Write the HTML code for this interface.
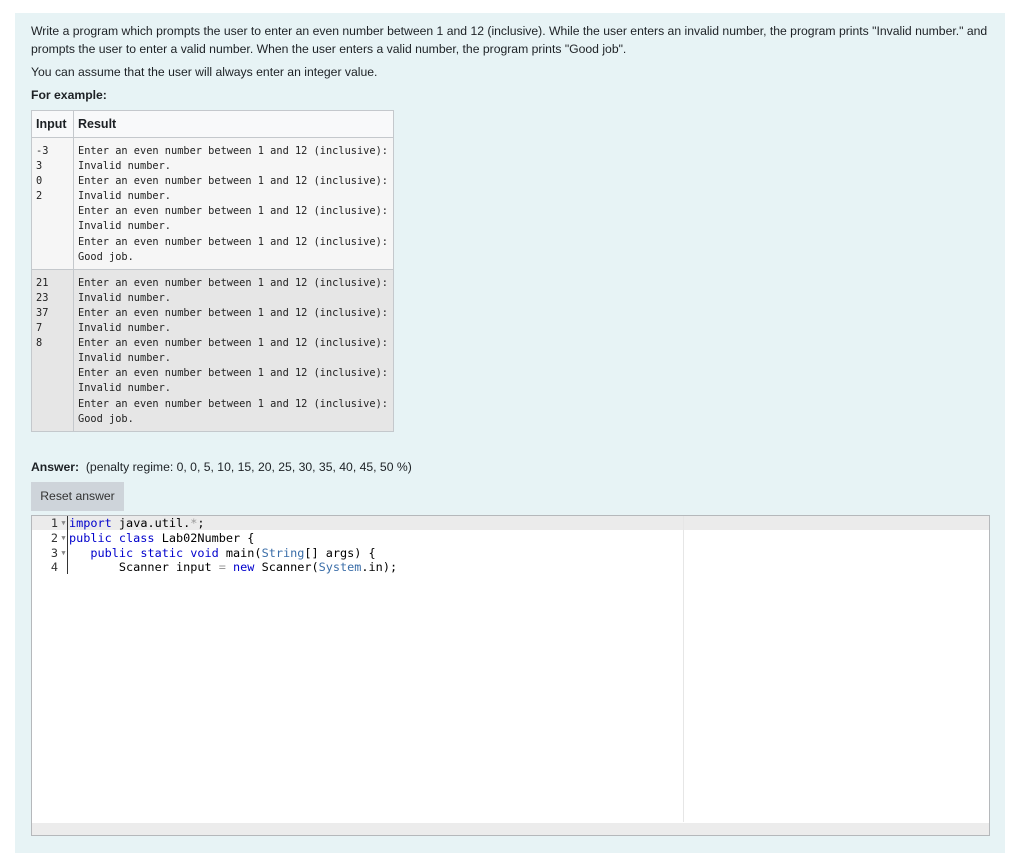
<!DOCTYPE html>
<html><head><meta charset="utf-8">
<style>
body{margin:0;background:#fff;width:1024px;height:840px;overflow:hidden;font-family:"Liberation Sans",sans-serif;color:#1d2125;}
.panel{position:absolute;left:15px;top:13px;width:990px;height:840px;background:#e7f3f5;}
.p{position:absolute;left:31px;font-size:12.2px;line-height:17.5px;}
table{position:absolute;left:31px;top:110px;border-collapse:collapse;font-size:12.2px;}
td,th{border:1px solid #c4c8cc;vertical-align:top;text-align:left;}
th{background:#f8f9fa;font-weight:bold;padding:6px 4px 5px 4px;height:15px;font-size:12.5px;}
td{font-family:"DejaVu Sans Mono",monospace;font-size:10.3px;line-height:15.1px;padding:6px 5px 4px 4px;white-space:pre;color:#222;}
tr.r1 td{background:#f6f6f6;}
tr.r2 td{background:#e6e6e6;}
.btn{position:absolute;left:31px;top:482px;width:93px;height:29px;background:#ced4da;font-size:12.2px;line-height:29px;text-align:center;color:#333;}
.ed{position:absolute;left:31px;top:515px;width:957px;height:319px;border:1px solid #b5b8bb;background:#fff;}
.gline{position:absolute;left:35px;top:0;width:1px;height:58px;background:#333;}
.gut2{position:absolute;left:0;top:0;width:957px;height:14px;background:#ebebeb;}
.bot{position:absolute;left:0;bottom:0;width:957px;height:12px;background:#ececec;}
.vline{position:absolute;left:651px;top:0;height:306px;border-left:1px solid #e6e6e6;}
.code{position:absolute;left:0;top:0;font-family:"DejaVu Sans Mono",monospace;font-size:11.85px;line-height:14.5px;white-space:pre;color:#000;}
.ln{display:inline-block;width:26px;text-align:right;color:#333;}
.ar{display:inline-block;width:11px;color:#888;font-size:7px;vertical-align:middle;text-align:center;}
.k{color:#00c;} .t{color:#3a6da8;} .o{color:#999;}
</style></head><body>
<div class="panel"></div>
<div class="p" style="top:23px;width:975px;">Write a program which prompts the user to enter an even number between 1 and 12 (inclusive). While the user enters an invalid number, the program prints "Invalid number." and prompts the user to enter a valid number. When the user enters a valid number, the program prints "Good job".</div>
<div class="p" style="top:64px;">You can assume that the user will always enter an integer value.</div>
<div class="p" style="top:87px;font-weight:bold;">For example:</div>
<table>
<tr><th style="width:33px">Input</th><th style="width:310px">Result</th></tr>
<tr class="r1"><td>-3
3
0
2</td><td>Enter an even number between 1 and 12 (inclusive):
Invalid number.
Enter an even number between 1 and 12 (inclusive):
Invalid number.
Enter an even number between 1 and 12 (inclusive):
Invalid number.
Enter an even number between 1 and 12 (inclusive):
Good job.</td></tr>
<tr class="r2"><td>21
23
37
7
8</td><td>Enter an even number between 1 and 12 (inclusive):
Invalid number.
Enter an even number between 1 and 12 (inclusive):
Invalid number.
Enter an even number between 1 and 12 (inclusive):
Invalid number.
Enter an even number between 1 and 12 (inclusive):
Invalid number.
Enter an even number between 1 and 12 (inclusive):
Good job.</td></tr>
</table>
<div class="p" style="top:459px;"><b>Answer:</b>&nbsp; (penalty regime: 0, 0, 5, 10, 15, 20, 25, 30, 35, 40, 45, 50 %)</div>
<div class="btn">Reset answer</div>
<div class="ed">
<div class="gut2"></div>
<div class="gline"></div>
<div class="vline"></div>
<div class="bot"></div>
<div class="code"><span class="ln">1</span><span class="ar">▼</span><span class="k">import</span> java.util.<span class="o">*</span>;
<span class="ln">2</span><span class="ar">▼</span><span class="k">public class</span> Lab02Number {
<span class="ln">3</span><span class="ar">▼</span>   <span class="k">public static void</span> main(<span class="t">String</span>[] args) {
<span class="ln">4</span><span class="ar"> </span>       Scanner input <span class="o">=</span> <span class="k">new</span> Scanner(<span class="t">System</span>.in);</div>
</div>
</body></html>
